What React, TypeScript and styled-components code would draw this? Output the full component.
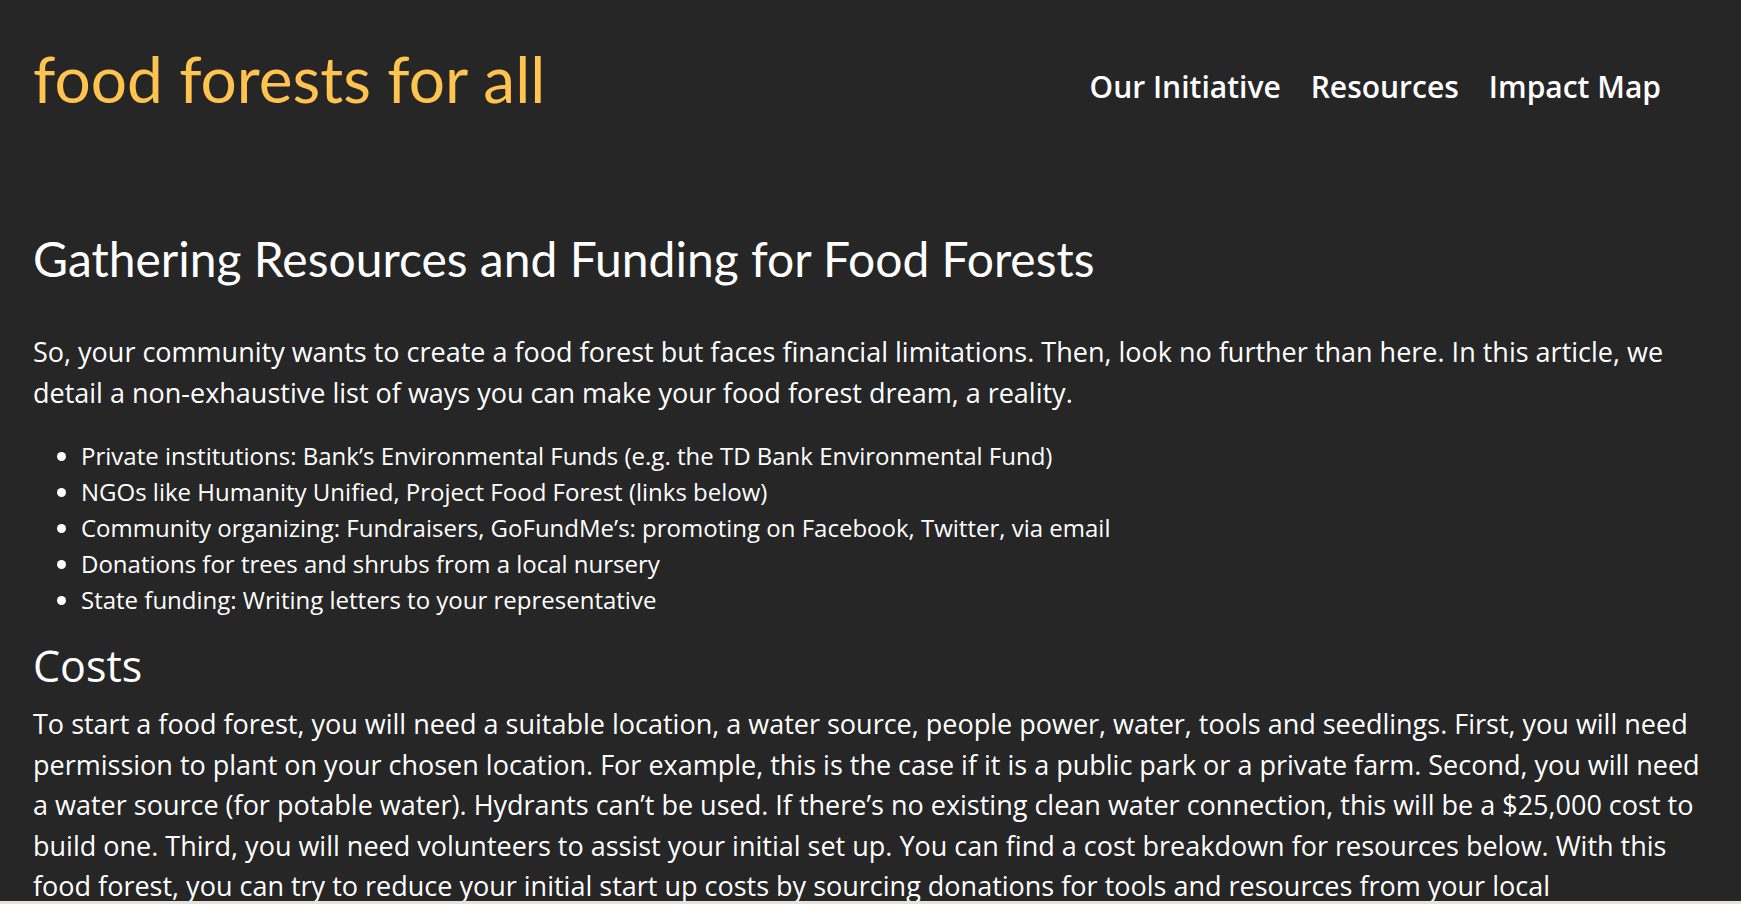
import React from "react";
import styled, { createGlobalStyle } from "styled-components";

const GlobalStyle = createGlobalStyle`
  html, body {
    margin: 0;
    padding: 0;
    background: #e6e2da;
  }
  body {
    font-family: "Open Sans", "Noto Sans", sans-serif;
    overflow: hidden;
  }
  * { box-sizing: border-box; }
`;

const Page = styled.div`
  background: #262626;
  color: #ffffff;
  height: 901px;
  padding: 0 33px;
`;

const Header = styled.header`
  display: flex;
  justify-content: space-between;
  align-items: flex-start;
  padding: 41px 47px 0 0;
`;

const Logo = styled.h1`
  margin: 0;
  font-family: "Lato", "Open Sans", sans-serif;
  font-weight: 400;
  font-size: 64px;
  line-height: 1.2;
  color: #ffc34f;
`;

const Nav = styled.nav`
  display: flex;
  gap: 30px;
  margin-top: 28px;
`;

const NavLink = styled.a`
  font-family: "Open Sans", sans-serif;
  font-weight: 600;
  font-size: 30px;
  line-height: 1.2;
  color: #ffffff;
  text-decoration: none;
`;

const Article = styled.main`
  padding-top: 112px;
`;

const Title = styled.h2`
  margin: 0 0 45px;
  font-family: "Lato", "Open Sans", sans-serif;
  font-weight: 400;
  font-size: 48px;
  line-height: 1.2;
`;

const Paragraph = styled.p`
  margin: 0;
  font-size: 27px;
  line-height: 1.5;
`;

const List = styled.ul`
  margin: 25px 0 18px;
  padding-left: 48px;
`;

const Item = styled.li`
  font-size: 24px;
  line-height: 1.5;
`;

const Subheading = styled.h3`
  margin: 0 0 9px;
  font-family: "Open Sans", sans-serif;
  font-weight: 400;
  font-size: 43px;
  line-height: normal;
`;

const fundingWays = [
  "Private institutions: Bank\u2019s Environmental Funds (e.g. the TD Bank Environmental Fund)",
  "NGOs like Humanity Unified, Project Food Forest (links below)",
  "Community organizing: Fundraisers, GoFundMe\u2019s: promoting on Facebook, Twitter, via email",
  "Donations for trees and shrubs from a local nursery",
  "State funding: Writing letters to your representative",
];

export default function App() {
  return (
    <>
      <GlobalStyle />
      <Page>
        <Header>
          <Logo>food forests for all</Logo>
          <Nav>
            <NavLink href="#">Our Initiative</NavLink>
            <NavLink href="#">Resources</NavLink>
            <NavLink href="#">Impact Map</NavLink>
          </Nav>
        </Header>
        <Article>
          <Title>Gathering Resources and Funding for Food Forests</Title>
          <Paragraph>
            So, your community wants to create a food forest but faces financial limitations. Then, look no further than here. In this article, we detail a non-exhaustive list of ways you can make your food forest dream, a reality.
          </Paragraph>
          <List>
            {fundingWays.map((w) => (
              <Item key={w}>{w}</Item>
            ))}
          </List>
          <Subheading>Costs</Subheading>
          <Paragraph>
            To start a food forest, you will need a suitable location, a water source, people power, water, tools and seedlings. First, you will need permission to plant on your chosen location. For example, this is the case if it is a public park or a private farm. Second, you will need a water source (for potable water). Hydrants can&rsquo;t be used. If there&rsquo;s no existing clean water connection, this will be a $25,000 cost to build one. Third, you will need volunteers to assist your initial set up. You can find a cost breakdown for resources below. With this food forest, you can try to reduce your initial start up costs by sourcing donations for tools and resources from your local neighbourhood, businesses and community members.
          </Paragraph>
        </Article>
      </Page>
    </>
  );
}
